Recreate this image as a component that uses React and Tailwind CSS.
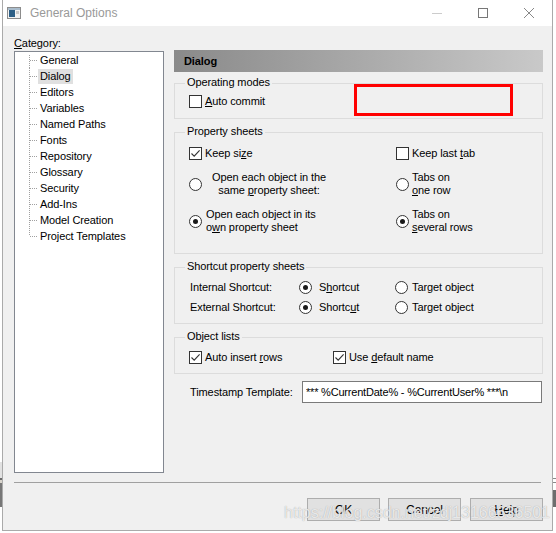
const TREE_ITEMS = [
  'General',
  'Dialog',
  'Editors',
  'Variables',
  'Named Paths',
  'Fonts',
  'Repository',
  'Glossary',
  'Security',
  'Add-Ins',
  'Model Creation',
  'Project Templates',
];

const U = ({ children }) => <span className="underline decoration-1 underline-offset-[1px]">{children}</span>;

const Check = ({ checked }) => (
  <span className="flex h-[13px] w-[13px] shrink-0 items-center justify-center border border-[#333333] bg-white">
    {checked && (
      <svg width="11" height="11" viewBox="0 0 11 11">
        <path d="M1.5 5.5 L4.2 8.2 L9.6 2.3" fill="none" stroke="#333333" strokeWidth="1.1" />
      </svg>
    )}
  </span>
);

const Radio = ({ checked }) => (
  <span className="flex h-[13px] w-[13px] shrink-0 items-center justify-center rounded-full border border-[#333333] bg-white">
    {checked && <span className="h-[5px] w-[5px] rounded-full bg-[#1a1a1a]" />}
  </span>
);

const Group = ({ label, className, children }) => (
  <div className={`relative border border-[#dcdcdc] ${className}`}>
    <span className="absolute -top-[8px] left-[10px] bg-[#f0f0f0] px-[2px] leading-[13px]">{label}</span>
    {children}
  </div>
);

const TreeRow = ({ label, index, last, selected }) => (
  <div className="flex h-[16px] items-center pl-[14px]">
    <svg width="9" height="16" viewBox="0 0 9 16" className="shrink-0">
      <line
        x1="0.5"
        y1={index === 0 ? 3 : 0}
        x2="0.5"
        y2={last ? 8 : 16}
        stroke="#a0a0a0"
        strokeDasharray="1 1"
      />
      <line x1="1" y1="8.5" x2="9" y2="8.5" stroke="#a0a0a0" strokeDasharray="1 1" />
    </svg>
    <span className={`px-[2px] leading-[15px] ${selected ? 'bg-[#e0e0e0]' : ''}`}>{label}</span>
  </div>
);

export default function App() {
  return (
    <div className="relative h-[533px] w-[556px] overflow-hidden bg-white font-['Liberation_Sans',Arial,sans-serif] text-[11px] tracking-[-0.1px] text-black">
      {/* bits of other windows peeking out behind the dialog */}
      <div className="absolute left-0 top-[462px] h-[16px] w-[2px] bg-[#e2e2e2]" />
      <div className="absolute left-0 top-[478px] h-[2px] w-[2px] bg-[#6a6a6a]" />
      <div className="absolute left-0 top-[480px] h-[3px] w-[2px] bg-[#d8d4cc]" />
      <div className="absolute left-0 top-[483px] h-[24px] w-[2px] bg-[#777777]" />
      <div className="absolute left-[553px] top-[478px] h-[1px] w-[3px] bg-[#8a8a8a]" />
      <div className="absolute left-[553px] top-[482px] h-[1px] w-[3px] bg-[#8a8a8a]" />
      <div className="absolute left-[553px] top-[490px] h-[17px] w-[3px] bg-[#6d6d6d]" />

      <div className="ml-[2px] flex h-[531px] w-[551px] flex-col border-x border-b border-[#aaaaaa]">
        {/* title bar */}
        <div className="flex h-[26px] shrink-0 items-center bg-white pl-[4px]">
          <svg width="14" height="12" viewBox="0 0 14 12" className="shrink-0">
            <rect x="0.5" y="0.5" width="13" height="11" fill="#f2f2f2" stroke="#8c8c8c" />
            <rect x="1" y="1" width="12" height="2" fill="#a9bccc" />
            <rect x="2" y="3" width="6" height="7" fill="#2d5f86" />
            <rect x="9" y="4" width="3" height="3" fill="#c8c8c8" />
          </svg>
          <span className="ml-[9px] text-[12px] tracking-normal text-[#999999]">General Options</span>
          <div className="ml-auto flex h-full">
            <div className="flex w-[46px] items-center justify-center">
              <svg width="10" height="10" viewBox="0 0 10 10">
                <line x1="0" y1="5.5" x2="10" y2="5.5" stroke="#cccccc" />
              </svg>
            </div>
            <div className="flex w-[46px] items-center justify-center">
              <svg width="10" height="10" viewBox="0 0 10 10">
                <rect x="0.5" y="0.5" width="9" height="9" fill="none" stroke="#777777" />
              </svg>
            </div>
            <div className="flex w-[46px] items-center justify-center">
              <svg width="10" height="10" viewBox="0 0 10 10">
                <path d="M0 0 L10 10 M10 0 L0 10" stroke="#888888" />
              </svg>
            </div>
          </div>
        </div>

        {/* body */}
        <div className="flex flex-1 flex-col bg-[#f0f0f0] pl-[11px] pr-[9px]">
          <div className="flex items-start gap-[10px]">
            {/* category tree */}
            <div className="flex w-[150px] flex-col pt-[10px]">
              <div className="leading-[14px]">
                <U>C</U>ategory:
              </div>
              <div className="mt-[1px] h-[422px] border border-[#828790] bg-white">
                {TREE_ITEMS.map((item, i) => (
                  <TreeRow
                    key={item}
                    label={item}
                    index={i}
                    last={i === TREE_ITEMS.length - 1}
                    selected={item === 'Dialog'}
                  />
                ))}
              </div>
            </div>

            {/* dialog page */}
            <div className="flex w-[369px] flex-col pt-[24px]">
              <div className="flex h-[22px] items-center bg-linear-to-r from-[#8a8a8a] to-[#c9c9c9] pl-[10px] font-bold">
                Dialog
              </div>

              <Group label="Operating modes" className="mt-[11px] h-[36px]">
                <div className="mt-[11px] flex items-center pl-[14px]">
                  <Check />
                  <span className="ml-[3px] leading-[13px]">
                    <U>A</U>uto commit
                  </span>
                </div>
                <div className="absolute left-[179px] top-0 h-[32px] w-[159px] border-[3px] border-[#ff0000]" />
              </Group>

              <Group label="Property sheets" className="mt-[13px] h-[122px]">
                <div className="grid grid-cols-[207px_1fr] pl-[14px]">
                  <div className="mt-[14px] flex h-[13px] items-center">
                    <Check checked />
                    <span className="ml-[3px]">
                      Keep si<U>z</U>e
                    </span>
                  </div>
                  <div className="mt-[14px] flex h-[13px] items-center">
                    <Check />
                    <span className="ml-[3px]">
                      Keep last <U>t</U>ab
                    </span>
                  </div>

                  <div className="mt-[11px] flex h-[26px] items-center">
                    <Radio />
                    <div className="ml-[4px] w-[126px] text-center leading-[13px]">
                      Open each object in the
                      <br />
                      same <U>p</U>roperty sheet:
                    </div>
                  </div>
                  <div className="mt-[11px] flex h-[26px] items-center">
                    <Radio />
                    <div className="ml-[3px] leading-[13px]">
                      Tabs on
                      <br />
                      <U>o</U>ne row
                    </div>
                  </div>

                  <div className="mt-[11px] flex h-[26px] items-center">
                    <Radio checked />
                    <div className="ml-[4px] leading-[13px]">
                      Open each object in its
                      <br />
                      o<U>w</U>n property sheet
                    </div>
                  </div>
                  <div className="mt-[11px] flex h-[26px] items-center">
                    <Radio checked />
                    <div className="ml-[3px] leading-[13px]">
                      Tabs on
                      <br />
                      <U>s</U>everal rows
                    </div>
                  </div>
                </div>
              </Group>

              <Group label="Shortcut property sheets" className="mt-[13px] h-[57px]">
                <div className="flex flex-col pl-[15px] pt-[9px]">
                  {['Internal Shortcut:', 'External Shortcut:'].map((label, i) => (
                    <div key={label} className="flex h-[20px] items-center">
                      <span className="w-[109px]">{label}</span>
                      <Radio checked />
                      <span className="ml-[7px] w-[76px]">
                        {i === 0 ? (
                          <>
                            S<U>h</U>ortcut
                          </>
                        ) : (
                          <>
                            Shortc<U>u</U>t
                          </>
                        )}
                      </span>
                      <Radio />
                      <span className="ml-[4px]">
                        Tar<U>g</U>et object
                      </span>
                    </div>
                  ))}
                </div>
              </Group>

              <Group label="Object lists" className="mt-[13px] h-[37px]">
                <div className="mt-[13px] flex items-center pl-[14px]">
                  <div className="flex w-[144px] items-center">
                    <Check checked />
                    <span className="ml-[3px] leading-[13px]">
                      Auto insert <U>r</U>ows
                    </span>
                  </div>
                  <Check checked />
                  <span className="ml-[3px] leading-[13px]">
                    Use <U>d</U>efault name
                  </span>
                </div>
              </Group>

              <div className="mt-[7px] flex h-[22px] items-center pl-[16px]">
                <span className="w-[112px]">Timestamp Template:</span>
                <input
                  readOnly
                  value={'*** %CurrentDate% - %CurrentUser% ***\\n'}
                  className="h-[22px] w-[240px] border border-[#7a7a7a] bg-white px-[3px] text-[11px] tracking-[-0.2px] outline-none"
                />
              </div>
            </div>
          </div>

          <div className="mt-[9px] h-[1px] w-[527px] bg-[#a0a0a0]" />

          <div className="mt-[15px] flex justify-end gap-[8px]">
            {['OK', 'Cancel'].map((b) => (
              <div
                key={b}
                className="flex h-[23px] w-[73px] items-center justify-center border border-[#adadad] bg-[#e1e1e1] text-[12px]"
              >
                {b}
              </div>
            ))}
            <div className="ml-[1px] flex h-[23px] w-[73px] items-center justify-center border border-[#adadad] bg-[#e1e1e1] text-[12px]">
              <span>
                <U>H</U>elp
              </span>
            </div>
          </div>
        </div>
      </div>

      {/* blog watermark over the screenshot */}
      <div className="absolute left-[284px] top-[503px] text-[16px] leading-[20px] tracking-normal text-white/75 [text-shadow:0_0_1px_#9a9a9a]">
        https://blog.csdn.net/zdj13166636501
      </div>
    </div>
  );
}
